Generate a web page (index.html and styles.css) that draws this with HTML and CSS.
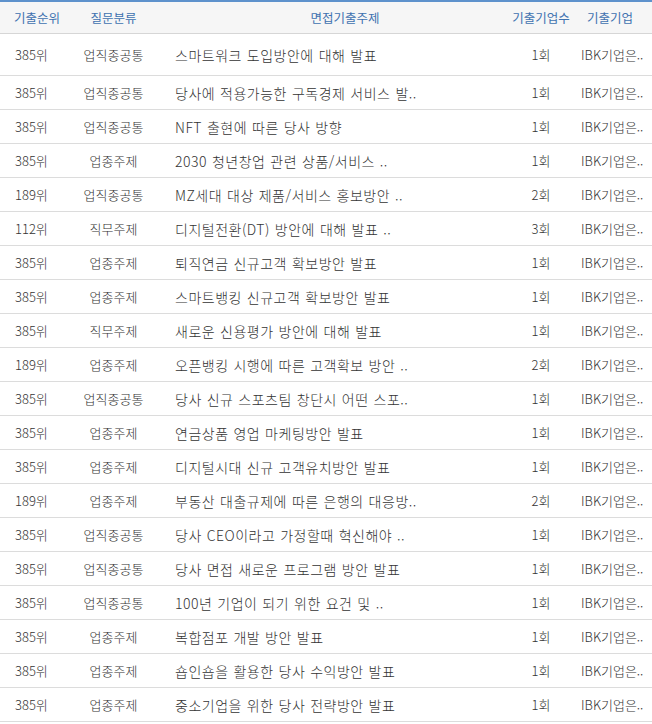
FILE: index.html
```html
<!DOCTYPE html>
<html lang="ko">
<head>
<meta charset="utf-8">
<link rel="stylesheet" href="styles.css">
</head>
<body>
<div class="tbl">
  <div class="row head">
    <div class="c1">기출순위</div>
    <div class="c2">질문분류</div>
    <div class="c3">면접기출주제</div>
    <div class="c4">기출기업수</div>
    <div class="c5">기출기업</div>
  </div>
  <div class="row first"><div class="c1">385위</div><div class="c2">업직종공통</div><div class="c3">스마트워크 도입방안에 대해 발표</div><div class="c4">1회</div><div class="c5">IBK기업은..</div></div>
  <div class="row"><div class="c1">385위</div><div class="c2">업직종공통</div><div class="c3">당사에 적용가능한 구독경제 서비스 발..</div><div class="c4">1회</div><div class="c5">IBK기업은..</div></div>
  <div class="row"><div class="c1">385위</div><div class="c2">업직종공통</div><div class="c3">NFT 출현에 따른 당사 방향</div><div class="c4">1회</div><div class="c5">IBK기업은..</div></div>
  <div class="row"><div class="c1">385위</div><div class="c2">업종주제</div><div class="c3">2030 청년창업 관련 상품/서비스 ..</div><div class="c4">1회</div><div class="c5">IBK기업은..</div></div>
  <div class="row"><div class="c1">189위</div><div class="c2">업직종공통</div><div class="c3">MZ세대 대상 제품/서비스 홍보방안 ..</div><div class="c4">2회</div><div class="c5">IBK기업은..</div></div>
  <div class="row"><div class="c1">112위</div><div class="c2">직무주제</div><div class="c3">디지털전환(DT) 방안에 대해 발표 ..</div><div class="c4">3회</div><div class="c5">IBK기업은..</div></div>
  <div class="row"><div class="c1">385위</div><div class="c2">업종주제</div><div class="c3">퇴직연금 신규고객 확보방안 발표</div><div class="c4">1회</div><div class="c5">IBK기업은..</div></div>
  <div class="row"><div class="c1">385위</div><div class="c2">업종주제</div><div class="c3">스마트뱅킹 신규고객 확보방안 발표</div><div class="c4">1회</div><div class="c5">IBK기업은..</div></div>
  <div class="row"><div class="c1">385위</div><div class="c2">직무주제</div><div class="c3">새로운 신용평가 방안에 대해 발표</div><div class="c4">1회</div><div class="c5">IBK기업은..</div></div>
  <div class="row"><div class="c1">189위</div><div class="c2">업종주제</div><div class="c3">오픈뱅킹 시행에 따른 고객확보 방안 ..</div><div class="c4">2회</div><div class="c5">IBK기업은..</div></div>
  <div class="row"><div class="c1">385위</div><div class="c2">업직종공통</div><div class="c3">당사 신규 스포츠팀 창단시 어떤 스포..</div><div class="c4">1회</div><div class="c5">IBK기업은..</div></div>
  <div class="row"><div class="c1">385위</div><div class="c2">업종주제</div><div class="c3">연금상품 영업 마케팅방안 발표</div><div class="c4">1회</div><div class="c5">IBK기업은..</div></div>
  <div class="row"><div class="c1">385위</div><div class="c2">업종주제</div><div class="c3">디지털시대 신규 고객유치방안 발표</div><div class="c4">1회</div><div class="c5">IBK기업은..</div></div>
  <div class="row"><div class="c1">189위</div><div class="c2">업종주제</div><div class="c3">부동산 대출규제에 따른 은행의 대응방..</div><div class="c4">2회</div><div class="c5">IBK기업은..</div></div>
  <div class="row"><div class="c1">385위</div><div class="c2">업직종공통</div><div class="c3">당사 CEO이라고 가정할때 혁신해야 ..</div><div class="c4">1회</div><div class="c5">IBK기업은..</div></div>
  <div class="row"><div class="c1">385위</div><div class="c2">업직종공통</div><div class="c3">당사 면접 새로운 프로그램 방안 발표</div><div class="c4">1회</div><div class="c5">IBK기업은..</div></div>
  <div class="row"><div class="c1">385위</div><div class="c2">업직종공통</div><div class="c3">100년 기업이 되기 위한 요건 및 ..</div><div class="c4">1회</div><div class="c5">IBK기업은..</div></div>
  <div class="row"><div class="c1">385위</div><div class="c2">업종주제</div><div class="c3">복합점포 개발 방안 발표</div><div class="c4">1회</div><div class="c5">IBK기업은..</div></div>
  <div class="row"><div class="c1">385위</div><div class="c2">업종주제</div><div class="c3">숍인숍을 활용한 당사 수익방안 발표</div><div class="c4">1회</div><div class="c5">IBK기업은..</div></div>
  <div class="row"><div class="c1">385위</div><div class="c2">업종주제</div><div class="c3">중소기업을 위한 당사 전략방안 발표</div><div class="c4">1회</div><div class="c5">IBK기업은..</div></div>
</div>
</body>
</html>
```
FILE: styles.css
```css
html, body {
  margin: 0;
  padding: 0;
  background: #fff;
}
body {
  font-family: "Noto Sans CJK KR", "Noto Sans", sans-serif;
  font-size: 13px;
  font-weight: 300;
  color: #333;
}
.tbl {
  width: 652px;
  border-top: 2px solid #5e92cc;
}
.row {
  display: flex;
  align-items: center;
  height: 33px;
  border-bottom: 1px solid #dcdcdc;
  white-space: nowrap;
}
.row.first {
  height: 41px;
}
.row.head {
  height: 31px;
  background: #f6f6f6;
  border-bottom: 1px solid #d6d6d6;
  color: #3f72b0;
  font-size: 12.5px;
  font-weight: 400;
}
.c1 { width: 72px; padding-left: 15px; box-sizing: border-box; }
.c2 { width: 83px; text-align: center; }
.c3 {
  width: 350px;
  padding-left: 20px;
  box-sizing: border-box;
  overflow: hidden;
  font-size: 14px;
  letter-spacing: 0.5px;
  word-spacing: 0.5px;
}
.c4 { width: 72px; text-align: center; }
.c5 { width: 75px; padding-left: 4px; box-sizing: border-box; overflow: hidden; }
.head .c1 { padding-left: 14px; }
.head .c3 { text-align: center; padding-left: 30px; font-size: 12.5px; letter-spacing: 0; word-spacing: 0; }
.head .c5 { padding-left: 10px; }
```
